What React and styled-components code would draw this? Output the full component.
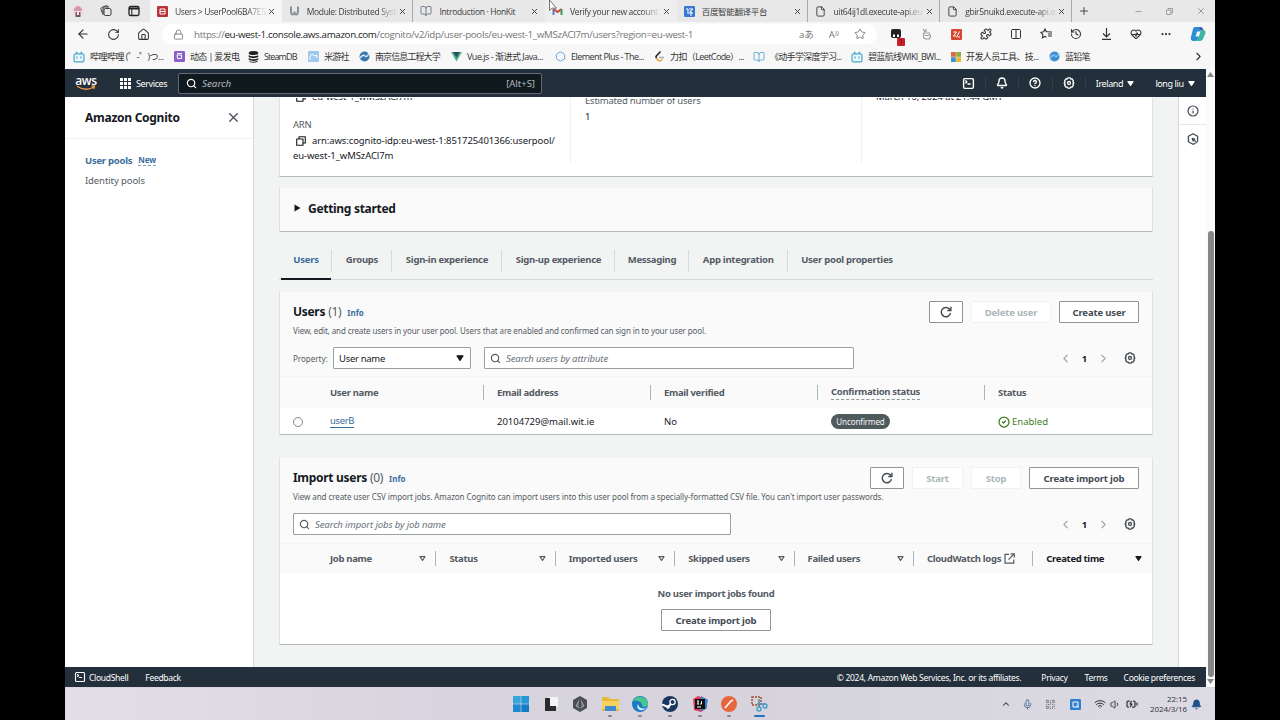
import React from 'react';
import styled, { createGlobalStyle } from 'styled-components';
import {
  ArrowLeft, RotateCw, House, Lock, Star, Puzzle, Columns2, History, HeartPulse,
  Ellipsis, ChevronRight, ChevronLeft, ChevronUp, Search, X, Plus, Minus, File, Info, Bell,
  CircleQuestionMark, SquareTerminal, Wifi, Volume1, Mic, CircleCheck,
  BookOpen, QrCode, BatteryCharging, Hexagon,
} from 'lucide-react';

const GlobalStyle = createGlobalStyle`
  * {
    box-sizing: border-box;
  }

  body {
    margin: 0;
    background: #000000;
    overflow: hidden;
  }
`;

const awsFont = "'Noto Sans', 'Noto Sans CJK SC', sans-serif";
const uiFont = "'Open Sans', 'Noto Sans CJK SC', sans-serif";

const Screen = styled.div`
  display: flex;
  flex-direction: column;
  width: 1150px;
  height: 720px;
  margin: 0 65px;
  background: #f7f7f7;
  font-family: ${awsFont};
  font-size: 9.5px;
  color: #16191f;
  white-space: nowrap;
  overflow: hidden;

  svg {
    flex-shrink: 0;
    display: block;
  }
`;

/* browser */

const TabStrip = styled.div`
  display: flex;
  align-items: center;
  height: 22px;
  padding-right: 9px;
  background: #e8e8e9;
  font-family: ${uiFont};
  color: #3b3b3b;
`;

const StripTools = styled.div`
  display: flex;
  align-items: center;
  gap: 16px;
  width: 85px;
  padding-left: 7px;
`;

const BrowserTab = styled.div`
  display: flex;
  align-items: center;
  width: 131.7px;
  height: 22px;
  padding: 0 5px 0 7px;
  background: ${({ $tone }) => $tone || 'transparent'};
  border-right: 1px solid ${({ $line }) => ($line ? '#a9a9a9' : 'transparent')};
`;

const TabTitle = styled.span`
  flex: 1;
  margin-left: 7px;
  font-size: 8.5px;
  letter-spacing: -0.33px;
  mask-image: ${({ $fade }) => ($fade ? 'linear-gradient(90deg, #000 78%, #0003 94%)' : 'none')};
`;

const NewTab = styled.div`
  margin-left: 6px;
`;

const WindowButtons = styled.div`
  display: flex;
  align-items: center;
  justify-content: space-between;
  width: 72px;
  margin-left: auto;
  color: #8a8a8a;
`;

const Toolbar = styled.div`
  display: flex;
  align-items: center;
  height: 24px;
  color: #333333;
  font-family: ${uiFont};
`;

const ToolItem = styled.div`
  position: relative;
  display: flex;
  align-items: center;
  justify-content: center;
  width: ${({ $w }) => $w || 30}px;
`;

const ToolGroup = styled.div`
  display: flex;
  padding-left: ${({ $pad }) => $pad || 0}px;
`;

const UrlBar = styled.div`
  display: flex;
  align-items: center;
  width: 715px;
  height: 20px;
  margin-left: 4px;
  padding: 0 11px 0 11px;
  border-radius: 10px;
  background: #ffffff;
  color: #767676;
  font-size: 9.8px;
`;

const Url = styled.span`
  flex: 1;
  margin-left: 10px;
  letter-spacing: -0.37px;

  b {
    font-weight: 400;
    color: #1b1b1b;
  }
`;

const UrlTools = styled.div`
  display: flex;
  align-items: center;
  gap: 15px;
  font-size: 9.5px;
`;

const ExtBadge = styled.span`
  position: absolute;
  right: 6px;
  bottom: -4px;
  width: 8px;
  height: 8px;
  border-radius: 1px;
  background: #c8202c;
  color: #5c0d12;
  font-size: 7px;
  line-height: 8px;
  text-align: center;
`;

const Bookmarks = styled.div`
  display: flex;
  align-items: center;
  height: 23px;
  padding: 0 10px 2px 8px;
  font-family: ${uiFont};
  font-size: 9px;
  color: #333333;
`;

const Bookmark = styled.div`
  display: flex;
  align-items: center;
  gap: 5px;
  width: ${({ $w }) => $w}px;
  letter-spacing: ${({ $spacing }) => $spacing || 0}px;
`;

const Chevron = styled.div`
  margin-left: auto;
`;

const Cursor = styled.svg`
  position: absolute;
  left: 548px;
  top: 0;
`;

/* AWS console */

const ConsoleArea = styled.div`
  display: flex;
  height: 619px;
  border-bottom: 1px solid #d8d6dc;
`;

const Console = styled.div`
  display: flex;
  flex-direction: column;
  width: 1141px;
`;

const Scrollbar = styled.div`
  display: flex;
  flex-direction: column;
  justify-content: space-between;
  align-items: center;
  width: 9px;
  padding: 3px 0;
  background: #fafafa;
`;

const Thumb = styled.div`
  width: 6px;
  height: 446px;
  margin: 151px 0 0 1px;
  border-radius: 3px;
  background: #868686;
`;

const TopNav = styled.div`
  display: flex;
  align-items: center;
  height: 28px;
  background: #232f3a;
  color: #ffffff;
  font-size: 9px;
`;

const Logo = styled.div`
  display: flex;
  flex-direction: column;
  align-items: center;
  width: 22px;
  margin-left: 10px;
  font-family: ${uiFont};
  font-size: 12px;
  font-weight: 600;
  line-height: 9px;
  letter-spacing: -0.4px;
`;

const Services = styled.div`
  display: flex;
  align-items: center;
  gap: 5px;
  width: 58px;
  margin-left: 23px;
  letter-spacing: -0.4px;
`;

const SearchBox = styled.div`
  display: flex;
  align-items: center;
  width: 364px;
  height: 21px;
  padding: 0 6px 0 7px;
  border: 1px solid #5f6b7a;
  border-radius: 2px;
  background: #10191d;
  color: #b4bbc2;
  font-size: 9.8px;
`;

const SearchHint = styled.i`
  flex: 1;
  margin-left: 5px;
`;

const Shortcut = styled.span`
  font-size: 9.5px;
`;

const NavIcons = styled.div`
  display: flex;
  margin-left: auto;
`;

const NavIcon = styled.div`
  display: flex;
  justify-content: center;
  width: 33.4px;
  border-right: 1px solid #313d4b;
`;

const NavMenu = styled.div`
  display: flex;
  align-items: center;
  justify-content: center;
  gap: 4px;
  width: ${({ $w }) => $w}px;
  letter-spacing: -0.4px;
`;

const Body = styled.div`
  display: flex;
  height: 570px;
`;

const Sidebar = styled.div`
  width: 189px;
  border-right: 1px solid #d5dbdb;
  background: #ffffff;
`;

const SideHeader = styled.div`
  display: flex;
  align-items: center;
  justify-content: space-between;
  height: 42px;
  margin-bottom: 11px;
  padding: 0 12px 0 20px;
  border-bottom: 1px solid #f0f2f2;
  font-size: 12px;
  font-weight: 700;
  letter-spacing: -0.27px;
`;

const SideLink = styled.div`
  display: flex;
  align-items: center;
  gap: 6px;
  height: 20px;
  padding-left: 20px;
  font-weight: ${({ $active }) => ($active ? 700 : 400)};
  letter-spacing: ${({ $active }) => ($active ? -0.25 : -0.1)}px;
  color: ${({ $active }) => ($active ? '#3b6d9c' : '#545b64')};
`;

const NewTag = styled.span`
  border-bottom: 1px dashed #7fa5c4;
  font-size: 8px;
  line-height: 11px;
  letter-spacing: -0.1px;
`;

const Content = styled.div`
  flex: 1;
  padding: 0 25px;
  background: #f2f3f3;
  overflow: hidden;
`;

const Card = styled.div`
  height: ${({ $h }) => $h}px;
  margin-top: ${({ $mt }) => $mt || 0}px;
  border: 1px solid #dde1e1;
  border-top-color: ${({ $flat }) => ($flat ? 'transparent' : '#f4f5f5')};
  border-bottom: 1px solid #b4babb;
  background: ${({ $tint }) => ($tint ? '#fafafa' : '#ffffff')};
  overflow: hidden;
`;

const Overview = styled.div`
  display: grid;
  grid-template-columns: 291px 291px 1fr;
  height: 74px;
  margin-top: -9px;
`;

const OverviewColumn = styled.div`
  padding: ${({ $top }) => $top || 0}px 0 0 ${({ $left }) => $left || 13}px;
  border-right: 1px solid ${({ $last }) => ($last ? 'transparent' : '#f0f2f2')};
  line-height: 15px;
`;

const Label = styled.div`
  margin: ${({ $top }) => $top || 0}px 0 1px;
  color: #545b64;
  letter-spacing: -0.22px;
`;

const Value = styled.div`
  display: flex;
  align-items: center;
  gap: 6px;
  padding-left: ${({ $indent }) => ($indent ? 3 : 0)}px;
  letter-spacing: -0.1px;
`;

const Expander = styled.div`
  display: flex;
  align-items: center;
  gap: 7px;
  height: 40px;
  padding-left: 14px;
  font-size: 12px;
  font-weight: 700;
  letter-spacing: -0.3px;
`;

const Tabs = styled.div`
  display: flex;
  align-items: center;
  height: 38px;
  margin-top: 10px;
  padding-left: 1px;
  border-bottom: 1px solid #d5dbdb;
`;

const Tab = styled.div`
  display: flex;
  justify-content: center;
  height: 38px;
  width: ${({ $w }) => $w}px;
  margin-left: 1px;
  padding-top: 7px;
  border-bottom: 2px solid ${({ $active }) => ($active ? '#16191f' : 'transparent')};
  color: ${({ $active }) => ($active ? '#3b6d9c' : '#545b64')};
  font-weight: 700;
  line-height: 22px;
  letter-spacing: -0.26px;
`;

const TabRule = styled.div`
  width: 1px;
  height: 22px;
  background: #d5dbdb;
`;

const PanelHeader = styled.div`
  display: flex;
  align-items: center;
  justify-content: space-between;
  height: 22px;
  margin-top: 9px;
  padding: 0 13px;
`;

const PanelTitle = styled.div`
  display: flex;
  align-items: baseline;
  padding-bottom: 2px;
  font-size: 12px;
  font-weight: 700;
  letter-spacing: -0.3px;
`;

const Count = styled.span`
  margin-left: 3px;
  color: #545b64;
  font-weight: 400;
`;

const InfoLink = styled.span`
  margin-left: 6px;
  color: #3b6d9c;
  font-size: 8px;
  letter-spacing: 0;
`;

const Actions = styled.div`
  display: flex;
  gap: 8px;
`;

const Button = styled.button`
  display: flex;
  align-items: center;
  justify-content: center;
  width: ${({ $w }) => $w}px;
  height: 22px;
  padding: 0;
  border: 1px solid ${({ disabled }) => (disabled ? '#f0f2f2' : '#8d9596')};
  border-radius: 1px;
  background: #ffffff;
  color: ${({ disabled }) => (disabled ? '#aab7b8' : '#444b53')};
  font-family: ${awsFont};
  font-size: 9.5px;
  font-weight: 700;
  letter-spacing: -0.15px;
`;

const Description = styled.div`
  height: 24px;
  padding-left: 13px;
  color: #545b64;
  font-size: 8px;
  line-height: 15px;
  letter-spacing: ${({ $spacing }) => $spacing}px;
`;

const Filters = styled.div`
  display: flex;
  align-items: center;
  height: 22px;
  padding: 0 16px 0 13px;
`;

const FilterLabel = styled.span`
  width: 40px;
  color: #545b64;
  font-size: 8px;
`;

const Field = styled.div`
  display: flex;
  align-items: center;
  justify-content: ${({ $select }) => ($select ? 'space-between' : 'flex-start')};
  gap: 5px;
  width: ${({ $w }) => $w}px;
  height: 22px;
  margin-right: 13px;
  padding: 0 6px 0 5px;
  border: 1px solid #9aa3a4;
  border-radius: 1px;
  background: #ffffff;
  letter-spacing: ${({ $select }) => ($select ? -0.3 : -0.1)}px;

  i {
    color: #687078;
  }
`;

const Pager = styled.div`
  display: flex;
  align-items: center;
  gap: 9px;
  margin-left: auto;
  color: #a3abac;

  b {
    width: 7px;
    color: #16191f;
    text-align: center;
  }
`;

const PagerGear = styled.div`
  margin-left: 5px;
  color: #444b53;
`;

const Row = styled.div`
  display: grid;
  grid-template-columns: 37px ${({ $cols }) => $cols};
  align-items: center;
  height: ${({ $h }) => $h}px;
  margin-top: ${({ $mt }) => $mt || 0}px;
  background: ${({ $plain }) => ($plain ? '#ffffff' : 'transparent')};
  border-top: 1px solid ${({ $plain }) => ($plain ? 'transparent' : '#f4f5f5')};
`;

const HeadCell = styled.div`
  display: flex;
  align-items: center;
  justify-content: space-between;
  height: 15px;
  padding: 0 ${({ $end }) => $end || 9}px 0 13px;
  border-right: 1px solid ${({ $last }) => ($last ? 'transparent' : '#aab7b8')};
  color: ${({ $sorted }) => ($sorted ? '#16191f' : '#545b64')};
  font-weight: 700;
  letter-spacing: -0.32px;
`;

const Dashed = styled.span`
  border-bottom: 1px dashed #8d9596;
  line-height: 14px;
`;

const HeadLink = styled.span`
  display: flex;
  align-items: center;
  gap: 3px;
`;

const Cell = styled.div`
  display: flex;
  align-items: center;
  gap: 2px;
  padding-left: 13px;
  color: ${({ $ok }) => ($ok ? '#3f7d1e' : '#16191f')};
`;

const Radio = styled.span`
  width: 10px;
  height: 10px;
  margin-left: 13px;
  border: 1px solid #7d8687;
  border-radius: 50%;
  background: #ffffff;
`;

const UserLink = styled.span`
  border-bottom: 1px solid #3b6d9c;
  color: #3b6d9c;
  line-height: 12px;
  letter-spacing: -0.35px;
`;

const Badge = styled.span`
  display: flex;
  align-items: center;
  justify-content: center;
  width: 59px;
  height: 15px;
  border-radius: 8px;
  background: #4f5a5d;
  color: #f5f5f5;
  font-size: 8px;
  letter-spacing: -0.1px;
`;

const Empty = styled.div`
  display: flex;
  flex-direction: column;
  align-items: center;
  gap: 9px;
  height: 71px;
  padding-top: 14px;
  background: #ffffff;
  color: #545b64;
  font-weight: 700;
  letter-spacing: -0.3px;
  line-height: 13px;
`;

const HelpRail = styled.div`
  display: flex;
  flex-direction: column;
  align-items: center;
  width: 28px;
  border-left: 1px solid #d5dbdb;
  background: #ffffff;
  color: #444b53;
`;

const RailItem = styled.div`
  display: flex;
  align-items: center;
  justify-content: center;
  width: 28px;
  height: 28px;
  border-bottom: 1px solid ${({ $line }) => ($line ? '#e5e8e8' : 'transparent')};
`;

const Footer = styled.div`
  display: flex;
  align-items: center;
  height: 20px;
  padding: 0 11px 0 9px;
  background: #232f3a;
  color: #ffffff;
  font-size: 8.5px;
  letter-spacing: -0.3px;
`;

const FooterItem = styled.span`
  display: flex;
  align-items: center;
  gap: 3px;
  margin-left: ${({ $left }) => $left || 0};
`;

/* Windows taskbar */

const Taskbar = styled.div`
  display: flex;
  align-items: center;
  height: 32px;
  background: linear-gradient(90deg, #e4dfe6 0, #d7d4df 35%, #d6d3dc 60%, #dcdae3 100%);
  font-family: ${uiFont};
  color: #333333;
`;

const Apps = styled.div`
  display: flex;
  margin-left: 441px;
`;

const AppSlot = styled.div`
  display: flex;
  flex-direction: column;
  align-items: center;
  gap: 3px;
  width: 29.8px;
  padding-top: 4px;

  &::after {
    content: '';
    width: ${({ $mark }) => $mark || 0}px;
    height: 2px;
    border-radius: 1px;
    background: ${({ $mark }) => ($mark > 4 ? '#1b75bb' : '#85858f')};
  }
`;

const Tray = styled.div`
  display: flex;
  align-items: center;
  margin-left: auto;
  padding-right: 13px;
`;

const TrayItem = styled.div`
  display: flex;
  justify-content: center;
  width: ${({ $w }) => $w}px;
`;

const Clock = styled.div`
  width: 41px;
  margin-right: 4px;
  font-size: 8px;
  line-height: 10.5px;
  letter-spacing: -0.1px;
  text-align: right;
`;

const Gear = () => (
  <svg width="12" height="12" viewBox="0 0 16 16" fill="none" stroke="currentColor" strokeWidth="1.7">
    <path d="M6.300 1.300h3.400l.7 1.500 1.700-.3 1.800 2.600-.8 1.400 1.400 1.500-1.400 1.500.8 1.400-1.800 2.600-1.700-.3-.7 1.500H6.300l-.7-1.500-1.700.3-1.800-2.600.8-1.400L1.500 8l1.400-1.500-.8-1.400 1.800-2.600 1.700.3z" strokeLinejoin="round" />
    <circle cx="8" cy="8" r="2" />
  </svg>
);

const Refresh = () => (
  <svg width="12" height="12" viewBox="0 0 16 16" fill="none" stroke="currentColor" strokeWidth="1.9">
    <path d="M14 9.500A6.200 6.200 0 1 1 12.600 4l1.600 1.800" />
    <path d="M14.500 1v5H9.600" />
  </svg>
);

const CopyIcon = ({ size = 10 }) => (
  <svg width={size} height={size} viewBox="0 0 10 10" fill="none" stroke="currentColor" strokeWidth="1.1" strokeLinejoin="round">
    <rect x=".7" y="3" width="6.3" height="6.3" />
    <path d="M3 3V.7h6.300V7H7" />
  </svg>
);

const OpenIcon = () => (
  <svg width="11" height="11" viewBox="0 0 11 11" fill="none" stroke="currentColor" strokeWidth="1.200">
    <path d="M5 1.400H1v8.800h8.800V6.500" />
    <path d="M6.500.8h3.800v3.800M10.200.9L4.500 6.600" />
  </svg>
);

const Triangle = ({ hollow, size = 8 }) => (
  <svg width={size} height={size} viewBox="0 0 8 8" fill={hollow ? 'none' : 'currentColor'} stroke="currentColor" strokeWidth="1.300" strokeLinejoin="round">
    <path d="M1.100 1.800h5.800L4 6.300z" />
  </svg>
);

const Tv = () => (
  <svg width="12" height="12" viewBox="0 0 12 12" fill="#eaf7fc" stroke="#4aa6c9" strokeWidth="1.2">
    <path d="M3 .8l1.600 1.700M9 .8L7.400 2.500" />
    <rect x="1" y="2.8" width="10" height="8" rx="1.6" />
    <path d="M4 5.500v2M8 5.500v2" />
  </svg>
);

const Square = ({ fill, glyph }) => (
  <svg width="11" height="11" viewBox="0 0 11 11">
    <rect width="11" height="11" rx="1.2" fill={fill} />
    <path d={glyph} fill="none" stroke="#ffffff" strokeWidth="1" />
  </svg>
);

const SteamDb = () => (
  <svg width="11" height="12" viewBox="0 0 11 12" fill="#222222">
    <ellipse cx="5.5" cy="2" rx="4.8" ry="2" />
    <path d="M.7 4c2 1.600 6 1.800 9.600.2V6c-3 1.600-7 1.400-9.600 0z" />
    <path d="M.7 7c2 1.600 6 1.800 9.600.2v1.600c-3 1.600-7 1.400-9.600 0z" />
    <path d="M.7 9.700c2 1.300 6 1.400 9.600.1-.5 2.400-9 2.500-9.600 0z" />
  </svg>
);

const Vue = () => (
  <svg width="11" height="10" viewBox="0 0 11 10">
    <path d="M0 0h11L5.500 9.600z" fill="#41b883" />
    <path d="M2.200 0h6.600L5.500 5.800z" fill="#34495e" />
  </svg>
);

const Leet = () => (
  <svg width="11" height="11" viewBox="0 0 11 11" fill="none" strokeWidth="1.5">
    <path d="M6.500.5L2.500 4.700Q1.500 6 2.500 7.200" stroke="#222222" />
    <path d="M2.500 7.200l1.800 2.300q1.200 1 2.500 0L8.200 8.300" stroke="#e0a030" />
    <path d="M5 6.500h5" stroke="#aaaaaa" />
  </svg>
);

const Quad = ({ size, colors }) => (
  <svg width={size} height={size} viewBox="0 0 10 10">
    <path d="M0 0h4.800v4.800H0z" fill={colors[0]} />
    <path d="M5.200 0H10v4.800H5.200z" fill={colors[1]} />
    <path d="M0 5.200h4.800V10H0z" fill={colors[2]} />
    <path d="M5.200 5.200H10V10H5.200z" fill={colors[3]} />
  </svg>
);

const Round = ({ fill, line }) => (
  <svg width="11" height="11" viewBox="0 0 11 11">
    <circle cx="5.5" cy="5.5" r="5" fill={fill} />
    <path d="M1 7q3-4 5-2t4-3" stroke={line} strokeWidth="1.4" fill="none" />
  </svg>
);

const bookmarks = [
  { icon: <Tv />, text: '哔哩哔哩 (゜-゜)つ...', w: 101, spacing: -0.5 },
  { icon: <Square fill="#8b5fd0" glyph="M3 4h4.500v3.500h-4zM3 2.500h5" />, text: '动态 | 爱发电', w: 74, spacing: -0.65 },
  { icon: <SteamDb />, text: 'SteamDB', w: 60, spacing: -0.9 },
  { icon: <Square fill="#9fc9ec" glyph="M2 9V5l2-2 2 2 3-1v3" />, text: '米游社', w: 51, spacing: -0.7 },
  { icon: <Round fill="#3c78b0" line="#d8eaf7" />, text: '南京信息工程大学', w: 92, spacing: -0.9 },
  { icon: <Vue />, text: 'Vue.js - 渐进式 Java...', w: 104, spacing: -0.5 },
  { icon: <Hexagon size={11} color="#5ba0e0" />, text: 'Element Plus - The...', w: 99, spacing: -0.55 },
  { icon: <Leet />, text: '力扣（LeetCode）...', w: 99, spacing: -0.6 },
  { icon: <BookOpen size={12} color="#5aa7cf" strokeWidth={1.8} />, text: '《动手学深度学习...', w: 98, spacing: -0.7 },
  { icon: <Tv />, text: '碧蓝航线WIKI_BWI...', w: 100, spacing: -0.65 },
  { icon: <Quad size={10} colors={['#e0683a', '#8bb13c', '#3c93d0', '#e8b73a']} />, text: '开发人员工具、技...', w: 98, spacing: -0.6 },
  { icon: <Round fill="#3f8fd2" line="#8cc3ee" />, text: '蓝铅笔', w: 60, spacing: -0.7 },
];

const browserTabs = [
  { icon: <Square fill="#b8323a" glyph="M3 3h5v5H3zM3 5.500h5" />, title: 'Users > UserPool6BA7E5', tone: '#f7f7f7', fade: true },
  {
    icon: (
      <svg width="11" height="10" viewBox="0 0 11 10" fill="none" stroke="#8c9196" strokeWidth="2">
        <path d="M2 .5v4.500q0 3.500 1.800 3.500T5.500 5.500q0 3 1.700 3T9 5V.5" />
      </svg>
    ),
    title: 'Module: Distributed Syst', line: true, fade: true,
  },
  { icon: <BookOpen size={12} color="#75818d" />, title: 'Introduction · HonKit' },
  {
    icon: (
      <svg width="11" height="9" viewBox="0 0 11 9" fill="none" strokeWidth="2">
        <path d="M1.500 8V2" stroke="#4a80d8" />
        <path d="M1.500 2l4 3 4-3" stroke="#d04438" />
        <path d="M9.500 2v6" stroke="#3d9a56" />
      </svg>
    ),
    title: 'Verify your new account', tone: '#eeeeee', fade: true,
  },
  { icon: <Square fill="#3a78d0" glyph="M2 3h2v5M5 3h4L5.500 6M5 7h4M7 5v5" />, title: '百度智能翻译平台', line: true },
  { icon: <File size={11} strokeWidth={2} />, title: 'uit64ij1dl.execute-api.eu', line: true, fade: true },
  { icon: <File size={11} strokeWidth={2} />, title: 'gbir5nuikd.execute-api.e', line: true, fade: true },
];

const consoleTabs = [
  { text: 'Users', w: 50, active: true },
  { text: 'Groups', w: 58 },
  { text: 'Sign-in experience', w: 108 },
  { text: 'Sign-up experience', w: 111 },
  { text: 'Messaging', w: 72 },
  { text: 'App integration', w: 96.5 },
  { text: 'User pool properties', w: 117 },
];

const jobColumns = ['Job name', 'Status', 'Imported users', 'Skipped users', 'Failed users'];

const apps = [
  { icon: <Quad size={16} colors={['#35a5dd', '#2698d8', '#1c8ad0', '#147cc6']} /> },
  {
    icon: (
      <svg width="16" height="16" viewBox="0 0 16 16">
        <rect x="5" y="1" width="10" height="10" fill="#f3f3f3" />
        <path d="M2 2h5v8h6v5H2z" fill="#2b2b2d" />
      </svg>
    ),
  },
  {
    icon: (
      <svg width="16" height="16" viewBox="0 0 16 16">
        <path d="M8 0l7 4v8l-7 4-7-4V4z" fill="#4b4e55" />
        <path d="M8 3l4 7-4 2-4-2z" fill="#6b6f77" stroke="#a6abb2" />
        <path d="M8 3v9" stroke="#20242a" />
      </svg>
    ),
  },
  {
    icon: (
      <svg width="17" height="16" viewBox="0 0 17 16">
        <path d="M0 1h6l2 2h9v12H0z" fill="#e9b93a" />
        <path d="M0 5h17v8H0z" fill="#f6d263" />
        <path d="M3 10h11v5H3z" fill="#3d8bd0" />
      </svg>
    ),
    mark: 4,
  },
  {
    icon: (
      <svg width="16" height="16" viewBox="0 0 16 16">
        <circle cx="8" cy="8" r="8" fill="#1b78c2" />
        <path d="M1 5a8 8 0 0 1 15 3c0 3-5 4-6 2 1-3-3-6-9-5z" fill="#44c78c" />
        <path d="M6 8c1 5 6 5 8.500 4C10 16.500 3 13.500 6 8z" fill="#d3effa" />
      </svg>
    ),
    mark: 4,
  },
  {
    icon: (
      <svg width="16" height="16" viewBox="0 0 16 16">
        <circle cx="8" cy="8" r="8" fill="#18365e" />
        <path d="M0 8.500l6 2.500 5-5" stroke="#ffffff" strokeWidth="2" fill="none" />
        <circle cx="10.5" cy="6" r="2.6" fill="#18365e" stroke="#ffffff" strokeWidth="1.3" />
        <circle cx="6" cy="11" r="1.8" fill="#ffffff" />
      </svg>
    ),
    mark: 4,
  },
  {
    icon: (
      <svg width="16" height="16" viewBox="0 0 16 16">
        <path d="M1 3l5-3 9 3v9l-6 4-7-2z" fill="#e23a5d" />
        <path d="M9 0l7 4-2 9-5 2z" fill="#2f86d6" />
        <rect x="3" y="3" width="10" height="10" fill="#101010" />
        <path d="M5 5h2M6 5v3M5 8h2M9.500 5v3H8M5 11h4" stroke="#ffffff" />
      </svg>
    ),
    mark: 4,
  },
  {
    icon: (
      <svg width="16" height="16" viewBox="0 0 16 16">
        <circle cx="8" cy="8" r="8" fill="#e8663c" />
        <path d="M4 12l6-7M10 5l2-1" stroke="#ffffff" strokeWidth="1.6" fill="none" />
      </svg>
    ),
    mark: 4,
  },
  {
    icon: (
      <svg width="17" height="16" viewBox="0 0 17 16" fill="none">
        <rect x="1" y="1" width="9" height="8" stroke="#a0523a" strokeWidth="1.5" strokeDasharray="2 1" />
        <path d="M8 3v9M6 8h9" stroke="#5a8fae" strokeWidth="1.6" />
        <circle cx="8" cy="13" r="2" stroke="#4a9cc8" strokeWidth="1.4" />
        <circle cx="14" cy="10" r="2" stroke="#4a9cc8" strokeWidth="1.4" />
      </svg>
    ),
    mark: 11,
  },
];

const PagerBar = () => (
  <Pager>
    <ChevronLeft size={13} strokeWidth={2.2} />
    <b>1</b>
    <ChevronRight size={13} strokeWidth={2.2} />
    <PagerGear><Gear /></PagerGear>
  </Pager>
);

const BrowserChrome = () => (
  <>
    <TabStrip>
      <StripTools>
        <svg width="12" height="14" viewBox="0 0 12 14">
          <circle cx="6" cy="7" r="6" fill="#f4dbe1" />
          <path d="M2 5q4-6 8 0v2H2z" fill="#d597ac" />
          <path d="M3.500 8h5v5h-5z" fill="#77546b" />
          <path d="M5 8h2v3H5z" fill="#f7e9ea" />
        </svg>
        <svg width="12" height="12" viewBox="0 0 12 12" fill="none" stroke="currentColor" strokeWidth="1">
          <rect x="4" y="3.500" width="7" height="7" rx="1.500" />
          <path d="M2.500 8.500L1 4.500Q.6 3 2 2.300L6 .8q1.500-.4 2.200 1M3 10V4q0-1.500 1.500-2H9" />
        </svg>
        <svg width="12" height="12" viewBox="0 0 12 12" fill="none" stroke="#222222" strokeWidth="1.3">
          <rect x="1" y="1.500" width="10" height="9" rx="1.5" />
          <path d="M1 3.500h10" strokeWidth="2" />
          <path d="M3.800 4v6.500" strokeWidth="1" />
        </svg>
      </StripTools>
      {browserTabs.map((tab) => (
        <BrowserTab key={tab.title} $tone={tab.tone} $line={tab.line}>
          {tab.icon}
          <TabTitle $fade={tab.fade}>{tab.title}</TabTitle>
          <X size={9} strokeWidth={2.4} />
        </BrowserTab>
      ))}
      <NewTab><Plus size={12} strokeWidth={1.8} /></NewTab>
      <WindowButtons>
        <Minus size={9} />
        <CopyIcon size={7} />
        <X size={10} />
      </WindowButtons>
    </TabStrip>
    <Toolbar>
      <ToolGroup $pad={3}>
        <ToolItem><ArrowLeft size={14} strokeWidth={1.9} /></ToolItem>
        <ToolItem><RotateCw size={13} strokeWidth={1.9} /></ToolItem>
        <ToolItem><House size={13} strokeWidth={1.9} /></ToolItem>
      </ToolGroup>
      <UrlBar>
        <Lock size={11} strokeWidth={1.9} />
        <Url>https://<b>eu-west-1.console.aws.amazon.com</b>/cognito/v2/idp/user-pools/eu-west-1_wMSzACl7m/users?region=eu-west-1</Url>
        <UrlTools>
          <span>aあ</span>
          <span>A⁾⁾</span>
          <Star size={12} strokeWidth={1.8} />
        </UrlTools>
      </UrlBar>
      <ToolGroup $pad={4}>
        <ToolItem>
          <svg width="12" height="11" viewBox="0 0 12 11">
            <rect x="1" y="0" width="10" height="9" rx="2" fill="#222222" />
            <path d="M3 5.500h2V8H3zM7 5.500h2V8H7z" fill="#ffffff" />
          </svg>
          <ExtBadge>1</ExtBadge>
        </ToolItem>
        <ToolItem>
          <svg width="11" height="12" viewBox="0 0 11 12" fill="none" stroke="#999999" strokeWidth="1.2">
            <path d="M2 1l2 3M5 1v3M2 5h7M3 5q-2 5 2 6h3q3-3 0-5M4 7.500h4" />
          </svg>
        </ToolItem>
        <ToolItem><Square fill="#d5482f" glyph="M2.500 3h3l-3 4h2.500M8.500 2.500l-3 6M7 8h2" /></ToolItem>
        <ToolItem><Puzzle size={12} strokeWidth={2.2} /></ToolItem>
        <ToolItem><Columns2 size={12} strokeWidth={2} /></ToolItem>
        <ToolItem>
          <svg width="13" height="12" viewBox="0 0 13 12" fill="none" stroke="currentColor" strokeWidth="1.1">
            <path d="M9 3.800H6.300L5 1 3.700 3.800.8 4.300l2.100 2.200-.5 3.300L5 8.400l1.500.8" />
            <path d="M8 6h4M8 8h4M9 4h3" />
          </svg>
        </ToolItem>
        <ToolItem><History size={12} strokeWidth={2.2} /></ToolItem>
        <ToolItem>
          <svg width="11" height="12" viewBox="0 0 11 12" fill="none" stroke="currentColor" strokeWidth="1.2">
            <path d="M5.500 0v9M2 5.500L5.500 9 9 5.500M1 11.300h9" />
          </svg>
        </ToolItem>
        <ToolItem>
          <HeartPulse size={12} strokeWidth={2.2} />
        </ToolItem>
        <ToolItem><Ellipsis size={12} strokeWidth={2.5} /></ToolItem>
        <ToolItem $w={34}>
          <svg width="16" height="16" viewBox="0 0 16 16">
            <path d="M5 1h4q2 0 1.500 2L8 13q-.7 2-2.500 2H3q-3-1-2-4L3 3q.5-2 2-2z" fill="#2b8fd4" />
            <path d="M10 4h4q2 1 1.500 3L13 13q-.8 2-3 2H5q2-.5 2.500-2.500z" fill="#3fb6a5" />
            <path d="M9 1h2q2 .5 2.500 3H10z" fill="#4a58c0" />
            <path d="M7 5.500h3.500L9 10.500H5.500z" fill="#e8f3fa" />
          </svg>
        </ToolItem>
      </ToolGroup>
    </Toolbar>
    <Bookmarks>
      {bookmarks.map((item) => (
        <Bookmark key={item.text} $w={item.w} $spacing={item.spacing}>
          {item.icon}
          {item.text}
        </Bookmark>
      ))}
      <Chevron><ChevronRight size={13} /></Chevron>
    </Bookmarks>
    <Cursor width="10" height="13" viewBox="0 0 10 13">
      <path d="M1.500 0v10.500l2.500-2.400 4.500.1z" fill="#ffffff" stroke="#555555" strokeWidth=".8" />
    </Cursor>
  </>
);

const ConsoleNav = () => (
  <TopNav>
    <Logo>
      aws
      <svg width="20" height="6" viewBox="0 0 20 6" fill="none" stroke="#f0a04b" strokeWidth="1.3">
        <path d="M1 1.200q8.500 5.500 16.500 1M15.500 1l3 .2-.8 2.800" />
      </svg>
    </Logo>
    <Services>
      <svg width="11" height="11" viewBox="0 0 11 11" fill="#ffffff">
        {[0, 4, 8].map((y) => [0, 4, 8].map((x) => <rect key={`${x}-${y}`} x={x} y={y} width="3" height="3" />))}
      </svg>
      Services
    </Services>
    <SearchBox>
      <Search size={11} color="#ffffff" strokeWidth={2.5} />
      <SearchHint>Search</SearchHint>
      <Shortcut>[Alt+S]</Shortcut>
    </SearchBox>
    <NavIcons>
      <NavIcon><SquareTerminal size={13} strokeWidth={2.6} /></NavIcon>
      <NavIcon><Bell size={12} strokeWidth={2.7} /></NavIcon>
      <NavIcon><CircleQuestionMark size={12} strokeWidth={2.7} /></NavIcon>
      <NavIcon><Gear /></NavIcon>
      <NavMenu $w={58}>Ireland <Triangle size={7} /></NavMenu>
      <NavMenu $w={62}>long liu <Triangle size={7} /></NavMenu>
    </NavIcons>
  </TopNav>
);

const UsersPanel = () => (
  <Card $h={144} $mt={11} $tint>
    <PanelHeader>
      <PanelTitle>Users <Count>(1)</Count><InfoLink>Info</InfoLink></PanelTitle>
      <Actions>
        <Button $w={34}><Refresh /></Button>
        <Button $w={80} disabled>Delete user</Button>
        <Button $w={80}>Create user</Button>
      </Actions>
    </PanelHeader>
    <Description $spacing={-0.11}>View, edit, and create users in your user pool. Users that are enabled and confirmed can sign in to your user pool.</Description>
    <Filters>
      <FilterLabel>Property:</FilterLabel>
      <Field $w={138} $select>User name <Triangle size={8} /></Field>
      <Field $w={370}><Search size={11} strokeWidth={2.5} color="#545b64" /><i>Search users by attribute</i></Field>
      <PagerBar />
    </Filters>
    <Row $h={32} $mt={7} $cols="167px 167px 167px 167px 1fr">
      <span />
      <HeadCell>User name</HeadCell>
      <HeadCell>Email address</HeadCell>
      <HeadCell>Email verified</HeadCell>
      <HeadCell><Dashed>Confirmation status</Dashed></HeadCell>
      <HeadCell $last>Status</HeadCell>
    </Row>
    <Row $h={26} $plain $cols="167px 167px 167px 167px 1fr">
      <Radio />
      <Cell><UserLink>userB</UserLink></Cell>
      <Cell>20104729@mail.wit.ie</Cell>
      <Cell>No</Cell>
      <Cell><Badge>Unconfirmed</Badge></Cell>
      <Cell $ok><CircleCheck size={12} strokeWidth={2.5} /> Enabled</Cell>
    </Row>
  </Card>
);

const ImportPanel = () => (
  <Card $h={188} $mt={22} $tint>
    <PanelHeader>
      <PanelTitle>Import users <Count>(0)</Count><InfoLink>Info</InfoLink></PanelTitle>
      <Actions>
        <Button $w={34}><Refresh /></Button>
        <Button $w={51} disabled>Start</Button>
        <Button $w={50} disabled>Stop</Button>
        <Button $w={110}>Create import job</Button>
      </Actions>
    </PanelHeader>
    <Description $spacing={-0.07}>View and create user CSV import jobs. Amazon Cognito can import users into this user pool from a specially-formatted CSV file. You can't import user passwords.</Description>
    <Filters>
      <Field $w={438}><Search size={11} strokeWidth={2.5} color="#545b64" /><i>Search import jobs by job name</i></Field>
      <PagerBar />
    </Filters>
    <Row $h={30} $mt={8} $cols="119.4px 119.4px 119.4px 119.4px 119.4px 119.4px 1fr">
      <span />
      {jobColumns.map((name) => (
        <HeadCell key={name}>{name} <Triangle hollow size={7} /></HeadCell>
      ))}
      <HeadCell><HeadLink>CloudWatch logs <OpenIcon /></HeadLink></HeadCell>
      <HeadCell $last $sorted>Created time <Triangle size={7} /></HeadCell>
    </Row>
    <Empty>
      No user import jobs found
      <Button $w={110}>Create import job</Button>
    </Empty>
  </Card>
);

const App = () => (
  <Screen>
    <GlobalStyle />
    <BrowserChrome />
    <ConsoleArea>
      <Console>
        <ConsoleNav />
        <Body>
          <Sidebar>
            <SideHeader>Amazon Cognito <X size={15} color="#444b53" strokeWidth={2} /></SideHeader>
            <SideLink $active>User pools <NewTag>New</NewTag></SideLink>
            <SideLink>Identity pools</SideLink>
          </Sidebar>
          <Content>
            <Card $h={80} $flat>
              <Overview>
                <OverviewColumn>
                  <Value $indent><CopyIcon />eu-west-1_wMSzACl7m</Value>
                  <Label $top={13}>ARN</Label>
                  <Value $indent><CopyIcon />arn:aws:cognito-idp:eu-west-1:851725401366:userpool/</Value>
                  <Value>eu-west-1_wMSzACl7m</Value>
                </OverviewColumn>
                <OverviewColumn $top={4} $left={14}>
                  <Label>Estimated number of users</Label>
                  <Value>1</Value>
                </OverviewColumn>
                <OverviewColumn $left={14} $last>
                  <Value>March 16, 2024 at 21:44 GMT</Value>
                </OverviewColumn>
              </Overview>
            </Card>
            <Card $h={45} $mt={10} $tint>
              <Expander>
                <svg width="7" height="8" viewBox="0 0 7 8"><path d="M.5.500L6.500 4 .5 7.500z" fill="#16191f" /></svg>
                Getting started
              </Expander>
            </Card>
            <Tabs>
              {consoleTabs.map((tab, i) => (
                <React.Fragment key={tab.text}>
                  {i > 0 && <TabRule />}
                  <Tab $w={tab.w} $active={tab.active}>{tab.text}</Tab>
                </React.Fragment>
              ))}
            </Tabs>
            <UsersPanel />
            <ImportPanel />
          </Content>
          <HelpRail>
            <RailItem $line><Info size={12} strokeWidth={2.4} /></RailItem>
            <RailItem>
              <svg width="12" height="12" viewBox="0 0 12 12" fill="none" stroke="currentColor" strokeWidth="1.3" strokeLinejoin="round">
                <path d="M8.500 10L6 11.300 1.400 8.700V3.300L6 .7l4.600 2.600v5.400" />
                <path d="M5 5.200l1 2.800.8-1.200L10.300 10M5 5.200l2.900.8-1.100.8" strokeWidth="1.1" />
              </svg>
            </RailItem>
          </HelpRail>
        </Body>
        <Footer>
          <FooterItem><SquareTerminal size={12} strokeWidth={2.3} />CloudShell</FooterItem>
          <FooterItem $left="17px">Feedback</FooterItem>
          <FooterItem $left="auto">© 2024, Amazon Web Services, Inc. or its affiliates.</FooterItem>
          <FooterItem $left="20px">Privacy</FooterItem>
          <FooterItem $left="17px">Terms</FooterItem>
          <FooterItem $left="16px">Cookie preferences</FooterItem>
        </Footer>
      </Console>
      <Scrollbar>
        <svg width="7" height="5" viewBox="0 0 7 5"><path d="M3.500 0L7 5H0z" fill="#868686" /></svg>
        <Thumb />
        <svg width="7" height="5" viewBox="0 0 7 5"><path d="M0 0h7L3.500 5z" fill="#868686" /></svg>
      </Scrollbar>
    </ConsoleArea>
    <Taskbar>
      <Apps>
        {apps.map((app, i) => (
          <AppSlot key={i} $mark={app.mark}>{app.icon}</AppSlot>
        ))}
      </Apps>
      <Tray>
        <TrayItem $w={22}><ChevronUp size={10} strokeWidth={2.5} /></TrayItem>
        <TrayItem $w={21}><Mic size={11} color="#4b6f9c" /></TrayItem>
        <TrayItem $w={24}><QrCode size={11} color="#777777" /></TrayItem>
        <TrayItem $w={26}><Square fill="#2f7fd2" glyph="M3 3h5v5H3zM6.500 6.500l2 2" /></TrayItem>
        <TrayItem $w={24}><Wifi size={12} /></TrayItem>
        <TrayItem $w={6}><Volume1 size={11} /></TrayItem>
        <TrayItem $w={28}><BatteryCharging size={12} strokeWidth={2.5} /></TrayItem>
        <Clock>22:15<br />2024/3/16</Clock>
        <Bell size={11} color="#1f4f8a" fill="#1f4f8a" />
      </Tray>
    </Taskbar>
  </Screen>
);

export default App;
